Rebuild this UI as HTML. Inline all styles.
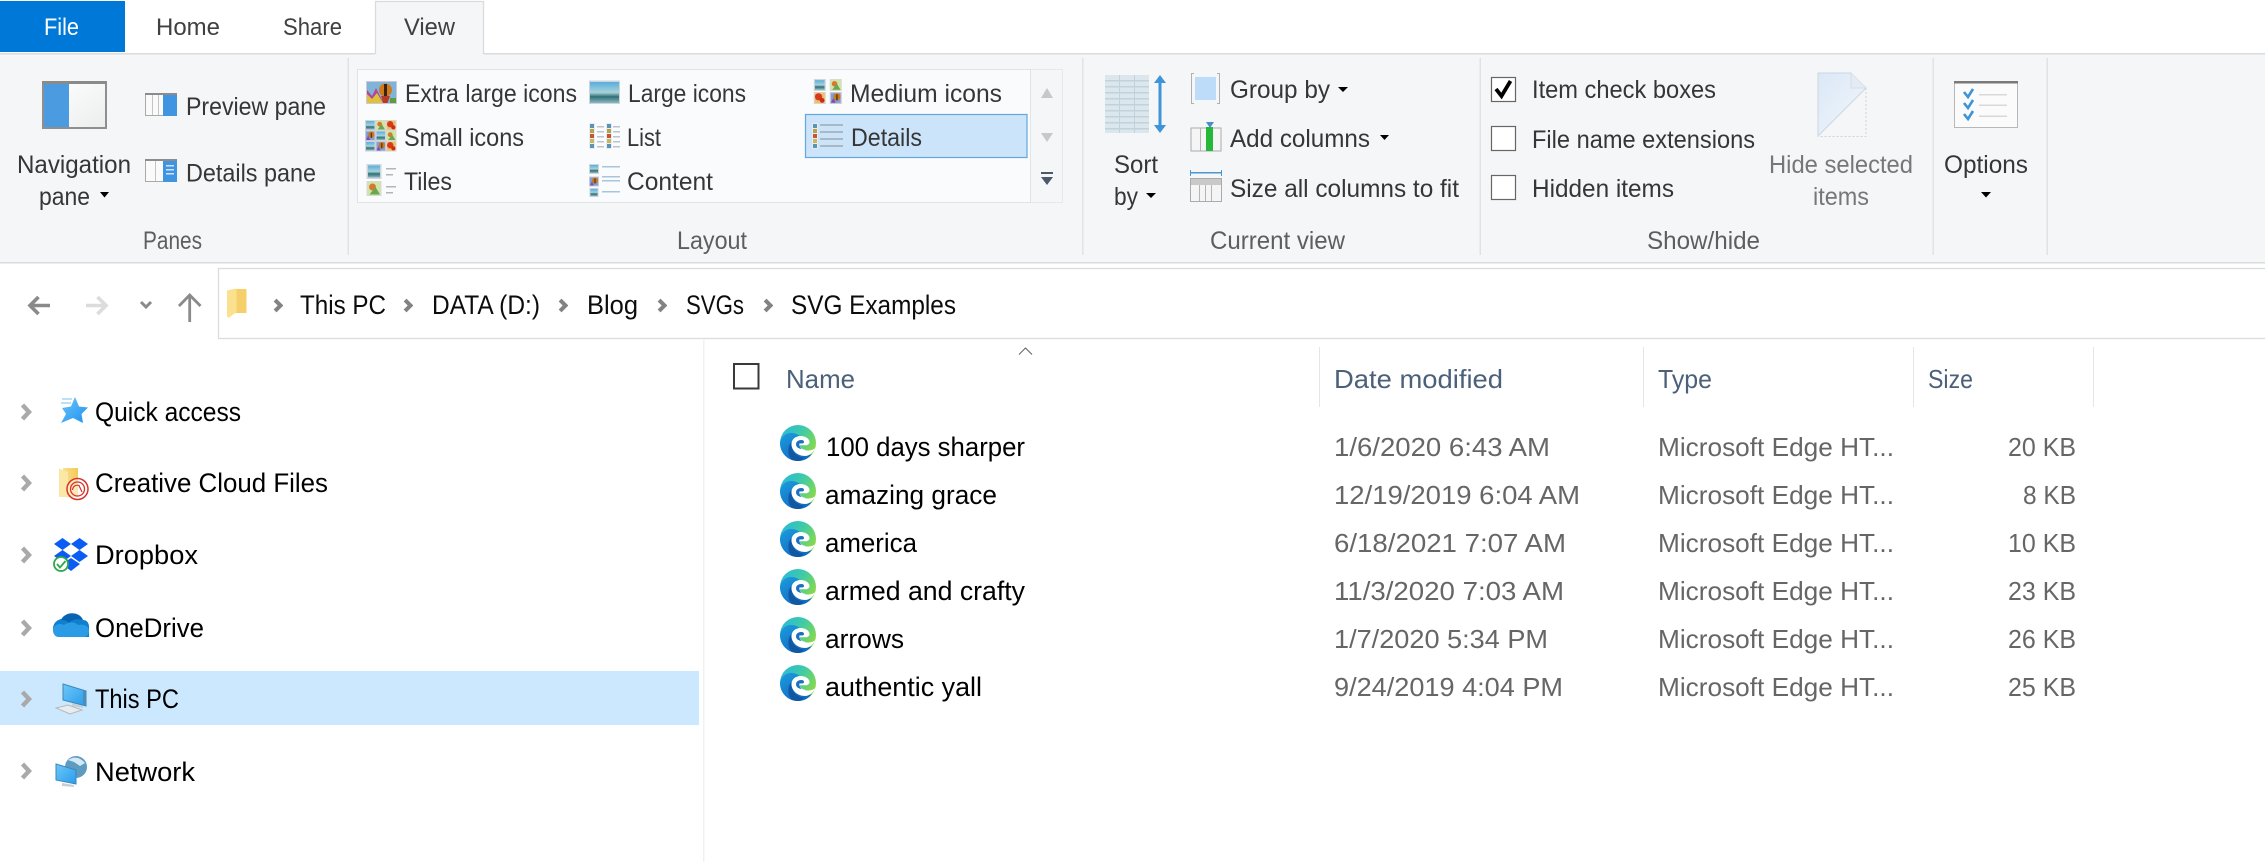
<!DOCTYPE html>
<html><head><meta charset="utf-8"><title>SVG Examples</title>
<style>
html,body{margin:0;padding:0;background:#fff;width:2265px;height:862px;overflow:hidden}
svg{display:block}
text{font-family:"Liberation Sans",sans-serif;font-size:25px;fill:#363636;white-space:pre}
.tab{font-size:24.5px;fill:#404040}
.lb{fill:#5e5e5e}
.nav{font-size:26.5px;fill:#000}
.adr{font-size:26.5px;fill:#0c0c0c}
.hd{font-size:26px;fill:#4c607a}
.nm{font-size:26.5px;fill:#000}
.dt{font-size:26px;fill:#666}
.dis{fill:#777}
</style></head><body>
<svg xmlns="http://www.w3.org/2000/svg" width="2265" height="862" viewBox="0 0 2265 862">
<defs>
<linearGradient id="sky" x1="0" y1="0" x2="0" y2="1"><stop offset="0" stop-color="#57aee0"/><stop offset=".5" stop-color="#a9d3d8"/><stop offset=".7" stop-color="#2f6f78"/><stop offset="1" stop-color="#8db9c0"/></linearGradient>
<linearGradient id="eg" x1="0" y1="0" x2="1" y2=".6"><stop offset="0" stop-color="#27b6e0"/><stop offset=".55" stop-color="#3fcba6"/><stop offset="1" stop-color="#8ad94a"/></linearGradient>
<linearGradient id="eb" x1="0" y1="0" x2=".6" y2="1"><stop offset="0" stop-color="#1d9be0"/><stop offset="1" stop-color="#0f6cc0"/></linearGradient>
<linearGradient id="navw" x1="0" y1="0" x2="1" y2="1"><stop offset="0" stop-color="#fff"/><stop offset="1" stop-color="#eceded"/></linearGradient>
<linearGradient id="pg" x1="0" y1="0" x2="1" y2="1"><stop offset="0" stop-color="#dbe8f7"/><stop offset="1" stop-color="#f2f6fb"/></linearGradient>
<linearGradient id="fold" x1="0" y1="0" x2="1" y2="0"><stop offset="0" stop-color="#fbe08e"/><stop offset="1" stop-color="#f3c95c"/></linearGradient>
<linearGradient id="star" x1="0" y1="0" x2="1" y2="1"><stop offset="0" stop-color="#6cc6fb"/><stop offset="1" stop-color="#1e90ef"/></linearGradient>
<linearGradient id="scr" x1="0" y1="0" x2="1" y2="1"><stop offset="0" stop-color="#6cc8f7"/><stop offset="1" stop-color="#2a9bec"/></linearGradient>

<symbol id="edge" viewBox="0 0 36 36">
<circle cx="18" cy="18" r="18" fill="url(#eg)"/>
<path d="M0 18C1 11 7 7 13 8C17 9 20 10.500 22 13C16 11 11.500 14 11.500 19C11.500 26 19 30.500 25 30.500C28 30.500 30 30 32 29C28.500 33.500 23.500 36 18 36C8 36 0 28 0 18Z" fill="url(#eb)"/>
<path d="M12 16.500C10 23 14 31 24 33C22 35.500 20 36 18 36C15.500 36 13.500 35.500 11.500 34.500C7 29 7.500 20 12 16.500Z" fill="#13519f" opacity=".85"/>
<path d="M11.500 19C11.500 14 16 10.800 21 11C26 11.200 29.500 14 29.500 17C29.500 19 28 20.300 25 20.300L19.500 20.300C20 23 23 25 27 25.500C30 25.800 33 25 35.500 23C33 28 29 31 25 31C17.500 31 11.500 25.500 11.500 19Z" fill="#fff"/>
<path d="M16 19.500C16 16.500 18.500 15 21.500 15C23 15 24 15.800 24 17C24 18 23.300 18.400 22 18.400L19.300 18.600C19 20.500 19.800 22 21.500 24C18 23.500 16 21.500 16 19.500Z" fill="#1a6fc0"/>
</symbol>

<symbol id="land" viewBox="0 0 10 10"><rect width="10" height="10" fill="#cfd6dc"/><rect x="1" y="1" width="8" height="8" fill="url(#sky)"/></symbol>
<symbol id="flo" viewBox="0 0 10 10"><rect width="10" height="10" fill="#d6dcc8"/><rect x="1" y="1" width="8" height="8" fill="#cfe6a8"/><circle cx="4" cy="4" r="2.300" fill="#d9772e"/><path d="M2 9L6 4L9 9Z" fill="#6aa84f"/></symbol>
<symbol id="red" viewBox="0 0 10 10"><rect width="10" height="10" fill="#e2cfc7"/><rect x="1" y="1" width="8" height="8" fill="#e8c25a"/><circle cx="4" cy="4" r="3" fill="#d8391c"/><circle cx="7" cy="7" r="2" fill="#c92c18"/></symbol>
<symbol id="bal" viewBox="0 0 10 10"><rect width="10" height="10" fill="#cfc8d8"/><rect x="1" y="1" width="8" height="8" fill="#7f9ed8"/><circle cx="6" cy="4" r="3" fill="#c9781e"/><path d="M1 9L3 5L5 9Z" fill="#7a4fa8"/><rect x="5.500" y="2" width="1" height="5" fill="#3c2a10"/></symbol>
<symbol id="tiny" viewBox="0 0 6 26"><rect width="6" height="26" fill="#e9edf2"/><rect x="1" y="1" width="4" height="4" fill="#5b93b8"/><rect x="1" y="6" width="4" height="4" fill="#b6a14f"/><rect x="1" y="11" width="4" height="4" fill="#c4553a"/><rect x="1" y="16" width="4" height="4" fill="#c9b85a"/><rect x="1" y="21" width="4" height="4" fill="#5b93b8"/></symbol>
<symbol id="chev" viewBox="0 0 12 18"><path d="M2.500 2L9 9L2.500 16" fill="none" stroke="#a9a9a9" stroke-width="4.400"/></symbol>
<symbol id="chevd" viewBox="0 0 12 18"><path d="M2.500 2.500L9 9L2.500 15.500" fill="none" stroke="#828282" stroke-width="4.800"/></symbol>
</defs>

<!-- tabs -->
<rect x="0" y="1" width="125" height="51" fill="#0078d7"/>
<text x="44" y="35" textLength="35" lengthAdjust="spacingAndGlyphs" style="fill:#fff" class="tab">File</text>
<text x="156" y="35" textLength="64" lengthAdjust="spacingAndGlyphs" class="tab">Home</text>
<text x="283" y="35" textLength="59" lengthAdjust="spacingAndGlyphs" class="tab">Share</text>

<!-- ribbon -->
<rect x="0" y="53" width="2265" height="209" fill="#f5f6f7"/>
<rect x="0" y="53" width="2265" height="1.500" fill="#dadbdc"/>
<rect x="0" y="262" width="2265" height="1.500" fill="#dadbdc"/>
<rect x="375" y="1" width="109" height="54" fill="#f5f6f7"/>
<path d="M375.500 54V1.500H483.500V54" fill="none" stroke="#dadbdc" stroke-width="1.300"/>
<text x="404" y="35" textLength="51" lengthAdjust="spacingAndGlyphs" class="tab">View</text>

<!-- separators -->
<rect x="347.500" y="58" width="1.500" height="197" fill="#e1e2e3"/>
<rect x="1082" y="58" width="1.500" height="197" fill="#e1e2e3"/>
<rect x="1479.500" y="58" width="1.500" height="197" fill="#e1e2e3"/>
<rect x="1932.500" y="58" width="1.500" height="197" fill="#e1e2e3"/>
<rect x="2046.500" y="58" width="1.500" height="197" fill="#e1e2e3"/>

<!-- Panes -->
<rect x="43" y="82" width="63" height="46" fill="url(#navw)" stroke="#8f8f8f" stroke-width="2"/>
<rect x="44" y="83" width="25" height="44" fill="#4b9be0"/>
<rect x="42" y="81" width="64" height="3" fill="#8a8a8a"/>
<text x="17" y="173" textLength="114" lengthAdjust="spacingAndGlyphs">Navigation</text>
<text x="39" y="205" textLength="51" lengthAdjust="spacingAndGlyphs">pane</text>
<path d="M100 192H109L104.500 197.500Z" fill="#000"/>

<rect x="145.500" y="93.500" width="31" height="22" fill="#fafafa" stroke="#a9a9a9"/>
<rect x="152" y="94" width="1" height="21" fill="#c4c4c4"/>
<rect x="158" y="94" width="1" height="21" fill="#c4c4c4"/>
<rect x="163" y="94" width="14" height="22" fill="#3f95e0"/>
<rect x="145" y="93" width="32" height="2" fill="#8c8c8c"/>
<text x="186" y="115" textLength="140" lengthAdjust="spacingAndGlyphs">Preview pane</text>

<rect x="145.500" y="159.500" width="31" height="22" fill="#fafafa" stroke="#a9a9a9"/>
<rect x="155" y="160" width="1" height="21" fill="#c4c4c4"/>
<rect x="163" y="160" width="14" height="22" fill="#3f95e0"/>
<rect x="145" y="159" width="32" height="2" fill="#8c8c8c"/>
<rect x="166" y="165" width="8" height="1.500" fill="#cfe4f8"/><rect x="166" y="169" width="8" height="1.500" fill="#cfe4f8"/><rect x="166" y="173" width="8" height="1.500" fill="#cfe4f8"/>
<text x="186" y="181.500" textLength="130" lengthAdjust="spacingAndGlyphs">Details pane</text>
<text x="143" y="249" textLength="59" lengthAdjust="spacingAndGlyphs" class="lb">Panes</text>

<!-- Layout gallery -->
<rect x="357.500" y="69.500" width="673" height="133" fill="#fafbfc" stroke="#e2e3e4"/>
<path d="M1031 69.500H1062.500V202.500H1031" fill="none" stroke="#e8e9ea"/>
<rect x="805.500" y="114.500" width="221.500" height="43" fill="#cce4f9" stroke="#62a8dc" stroke-width="1.200"/>
<path d="M1047 88L1053 98H1041Z" fill="#c6c8ca"/>
<path d="M1041 133H1053L1047 142Z" fill="#c6c8ca"/>
<rect x="1041" y="172" width="12" height="2" fill="#4a5a6a"/>
<path d="M1041 177H1053L1047 185Z" fill="#4a5a6a"/>

<!-- extra large -->
<rect x="366" y="81" width="31" height="23" fill="#cfc8d8"/>
<rect x="367" y="82" width="29" height="21" fill="#7fb3d8"/>
<path d="M367 103V90L372 96L376 88L381 98L384 103Z" fill="#b0489a"/>
<path d="M367 94L372 99L377 93L383 103H367Z" fill="#e0c23a"/>
<circle cx="385.500" cy="90" r="6.500" fill="#d07a1c"/>
<rect x="384" y="84" width="3" height="12" fill="#3a2410"/>
<path d="M381 96H390L387.500 103H383.500Z" fill="#b83a20"/>
<rect x="390" y="98" width="6" height="5" fill="#5c9c40"/>
<text x="405" y="102" textLength="172" lengthAdjust="spacingAndGlyphs">Extra large icons</text>

<!-- large -->
<rect x="589" y="80.500" width="31" height="23.500" fill="#cdd5dc"/>
<rect x="590" y="82" width="29" height="21" fill="url(#sky)"/>
<text x="628" y="102" textLength="118" lengthAdjust="spacingAndGlyphs">Large icons</text>

<!-- medium -->
<use href="#land" x="812" y="79" width="15.500" height="12" preserveAspectRatio="none"/>
<use href="#flo" x="828" y="79" width="15.500" height="12"/>
<use href="#red" x="812" y="92" width="15.500" height="12"/>
<use href="#bal" x="828" y="92" width="15.500" height="12"/>
<text x="850" y="102" textLength="152" lengthAdjust="spacingAndGlyphs">Medium icons</text>

<!-- small -->
<use href="#land" x="365" y="120" width="10.500" height="10.500"/><use href="#flo" x="375.500" y="120" width="10.500" height="10.500"/><use href="#red" x="386" y="120" width="10.500" height="10.500"/>
<use href="#bal" x="365" y="130.500" width="10.500" height="10.500"/><use href="#land" x="375.500" y="130.500" width="10.500" height="10.500"/><use href="#flo" x="386" y="130.500" width="10.500" height="10.500"/>
<use href="#land" x="365" y="141" width="10.500" height="10.500"/><use href="#bal" x="375.500" y="141" width="10.500" height="10.500"/><use href="#red" x="386" y="141" width="10.500" height="10.500"/>
<text x="404" y="146" textLength="120" lengthAdjust="spacingAndGlyphs">Small icons</text>

<!-- list -->
<use href="#tiny" x="589" y="123" width="6" height="26"/><use href="#tiny" x="606" y="123" width="6" height="26"/>
<g fill="#b9c4cf"><rect x="597" y="126" width="7" height="1.500"/><rect x="597" y="131" width="7" height="1.500"/><rect x="597" y="136" width="7" height="1.500"/><rect x="597" y="141" width="7" height="1.500"/><rect x="597" y="146" width="7" height="1.500"/><rect x="613" y="126" width="7" height="1.500"/><rect x="613" y="131" width="7" height="1.500"/><rect x="613" y="136" width="7" height="1.500"/><rect x="613" y="141" width="7" height="1.500"/><rect x="613" y="146" width="7" height="1.500"/></g>
<text x="627" y="146" textLength="34" lengthAdjust="spacingAndGlyphs">List</text>

<!-- details -->
<use href="#tiny" x="812" y="123" width="6" height="26"/>
<g fill="#aab7c4"><rect x="820" y="124" width="23" height="2"/><rect x="820" y="131" width="23" height="2"/><rect x="820" y="138" width="23" height="2"/><rect x="820" y="145" width="23" height="2"/></g>
<text x="851" y="146" textLength="71" lengthAdjust="spacingAndGlyphs">Details</text>

<!-- tiles -->
<use href="#land" x="365.500" y="164" width="17" height="15"/><use href="#flo" x="365.500" y="181" width="17" height="15"/>
<g fill="#b5b5b5"><rect x="386" y="168" width="10" height="1.500"/><rect x="386" y="174" width="7" height="1.500"/><rect x="386" y="186" width="10" height="1.500"/><rect x="386" y="192" width="7" height="1.500"/></g>
<text x="404" y="190" textLength="48" lengthAdjust="spacingAndGlyphs">Tiles</text>

<!-- content -->
<use href="#land" x="589" y="164" width="10" height="10"/><use href="#bal" x="589" y="176" width="10" height="11"/><use href="#land" x="589" y="188" width="10" height="9"/>
<g fill="#a9c5dd"><rect x="602" y="166" width="18" height="1.500"/><rect x="602" y="176" width="18" height="1.500"/><rect x="602" y="180" width="18" height="1.500"/><rect x="602" y="191" width="18" height="1.500"/></g>
<text x="627" y="190" textLength="86" lengthAdjust="spacingAndGlyphs">Content</text>
<text x="677" y="249" textLength="70" lengthAdjust="spacingAndGlyphs" class="lb">Layout</text>

<!-- Current view -->
<rect x="1105" y="75" width="44" height="58" fill="#dbe7ec"/>
<g fill="#c0d3dc"><rect x="1105" y="80" width="44" height="1.500"/><rect x="1105" y="86" width="44" height="1.500"/><rect x="1105" y="92" width="44" height="1.500"/><rect x="1105" y="98" width="44" height="1.500"/><rect x="1105" y="104" width="44" height="1.500"/><rect x="1105" y="110" width="44" height="1.500"/><rect x="1105" y="116" width="44" height="1.500"/><rect x="1105" y="122" width="44" height="1.500"/><rect x="1105" y="128" width="44" height="1.500"/><rect x="1119" y="75" width="1" height="58"/><rect x="1134" y="75" width="1" height="58"/></g>
<rect x="1158.500" y="80" width="3" height="48" fill="#3d94d8"/>
<path d="M1160 75L1166 83H1154Z M1160 133L1166 125H1154Z" fill="#3d94d8"/>
<text x="1114" y="173" textLength="44" lengthAdjust="spacingAndGlyphs">Sort</text>
<text x="1114" y="205" textLength="24" lengthAdjust="spacingAndGlyphs">by</text>
<path d="M1146 193H1156L1151 198Z" fill="#000"/>

<path d="M1194 73.500H1191.500V103.500H1194M1217 73.500H1219.500V103.500H1217" fill="none" stroke="#b0b0b0"/>
<rect x="1195" y="77" width="21" height="23" fill="#bcdcf9"/>
<text x="1230" y="98" textLength="100" lengthAdjust="spacingAndGlyphs">Group by</text>
<path d="M1338 87H1348L1343 92Z" fill="#000"/>

<rect x="1191" y="128" width="30" height="23" fill="#f5f5f5" stroke="#ababab"/>
<rect x="1200" y="128" width="1" height="23" fill="#b5b5b5"/>
<rect x="1206" y="127" width="7" height="24" fill="#25b83a"/>
<path d="M1206 122H1214L1210 128Z" fill="#4a8cc8"/>
<text x="1230" y="147" textLength="140" lengthAdjust="spacingAndGlyphs">Add columns</text>
<path d="M1380 135H1389L1384.500 140Z" fill="#000"/>

<rect x="1190" y="172" width="32" height="1.500" fill="#4a96d0"/>
<rect x="1190" y="170" width="1" height="6" fill="#4a96d0"/><rect x="1221" y="170" width="1" height="6" fill="#4a96d0"/>
<rect x="1190.500" y="178.500" width="31" height="23" fill="#f5f5f5" stroke="#ababab"/>
<rect x="1191" y="179" width="30" height="6" fill="#c9c9c9"/>
<g fill="#b5b5b5"><rect x="1199" y="185" width="1" height="16"/><rect x="1205" y="185" width="1" height="16"/><rect x="1211" y="185" width="1" height="16"/></g>
<text x="1230" y="197" textLength="229" lengthAdjust="spacingAndGlyphs">Size all columns to fit</text>
<text x="1210" y="249" textLength="135" lengthAdjust="spacingAndGlyphs" class="lb">Current view</text>

<!-- Show/hide -->
<rect x="1491.500" y="77.500" width="24" height="24" fill="#fff" stroke="#666" stroke-width="1.200"/>
<path d="M1496 89L1501.500 96L1510.500 81" fill="none" stroke="#000" stroke-width="3.800"/>
<text x="1532" y="98" textLength="184" lengthAdjust="spacingAndGlyphs">Item check boxes</text>
<rect x="1491.500" y="126.500" width="24" height="24" fill="#fff" stroke="#666" stroke-width="1.200"/>
<text x="1532" y="148" textLength="223" lengthAdjust="spacingAndGlyphs">File name extensions</text>
<rect x="1491.500" y="175.500" width="24" height="24" fill="#fff" stroke="#666" stroke-width="1.200"/>
<text x="1532" y="197" textLength="142" lengthAdjust="spacingAndGlyphs">Hidden items</text>
<text x="1647" y="249" textLength="113" lengthAdjust="spacingAndGlyphs" class="lb">Show/hide</text>

<path d="M1818 73H1851L1866 88L1818 136Z" fill="url(#pg)" stroke="#ccd6e2"/>
<path d="M1851 73V88H1866" fill="#e4ebf3" stroke="#d5dde6"/>
<path d="M1866 88V136.500H1818" fill="none" stroke="#cfd4da" stroke-dasharray="2 2"/>
<text x="1769" y="173" textLength="144" lengthAdjust="spacingAndGlyphs" class="dis">Hide selected</text>
<text x="1813" y="205" textLength="56" lengthAdjust="spacingAndGlyphs" class="dis">items</text>

<!-- Options -->
<rect x="1954.500" y="81.500" width="63" height="46" fill="#fbfbfb" stroke="#b8b8b8"/>
<rect x="1954" y="81" width="64" height="2.500" fill="#7a7a7a"/>
<g fill="none" stroke="#3d94d8" stroke-width="2.600"><path d="M1964 92L1968 97L1973 89"/><path d="M1964 103L1968 108L1973 100"/><path d="M1964 114L1968 119L1973 111"/></g>
<g fill="#d8d8d8"><rect x="1979" y="94" width="28" height="1.500"/><rect x="1979" y="104.500" width="28" height="1.500"/><rect x="1979" y="115.500" width="28" height="1.500"/></g>
<text x="1944" y="173" textLength="84" lengthAdjust="spacingAndGlyphs">Options</text>
<path d="M1981 192H1991L1986 197.500Z" fill="#000"/>

<!-- nav buttons -->
<g fill="none" stroke="#8a8a8a" stroke-width="3.600"><path d="M30 305.500H50"/><path d="M38.500 297L30 305.500L38.500 314"/></g>
<g fill="none" stroke="#dcdcdc" stroke-width="3.600"><path d="M86 305.500H106"/><path d="M97.500 297L106 305.500L97.500 314"/></g>
<path d="M141 302L146 307L151 302" fill="none" stroke="#8a8a8a" stroke-width="3"/>
<g fill="none" stroke="#8a8a8a" stroke-width="2.800"><path d="M189.700 295V322"/><path d="M179 306L189.700 295L200.500 306"/></g>

<!-- address -->
<path d="M2265 268.500H218.500V338.500H2265" fill="#fff" stroke="#dcdcdc" stroke-width="1.300"/>
<path d="M233 289H246.500V313H233Z" fill="#f5cf6a"/>
<path d="M227 290.500L236.500 288.500V312L228.500 318L227 316Z" fill="#fbe08e"/>
<use href="#chevd" x="273" y="298" width="10" height="15"/>
<use href="#chevd" x="403" y="298" width="10" height="15"/>
<use href="#chevd" x="558" y="298" width="10" height="15"/>
<use href="#chevd" x="657" y="298" width="10" height="15"/>
<use href="#chevd" x="763" y="298" width="10" height="15"/>
<text x="300" y="314" textLength="86" lengthAdjust="spacingAndGlyphs" class="adr">This PC</text>
<text x="432" y="314" textLength="108" lengthAdjust="spacingAndGlyphs" class="adr">DATA (D:)</text>
<text x="587" y="314" textLength="51" lengthAdjust="spacingAndGlyphs" class="adr">Blog</text>
<text x="686" y="314" textLength="58" lengthAdjust="spacingAndGlyphs" class="adr">SVGs</text>
<text x="791" y="314" textLength="165" lengthAdjust="spacingAndGlyphs" class="adr">SVG Examples</text>

<!-- tree -->
<rect x="0" y="671" width="699" height="54" fill="#cce8ff"/>
<use href="#chev" x="20" y="403" width="12" height="18"/>
<use href="#chev" x="20" y="474" width="12" height="18"/>
<use href="#chev" x="20" y="546" width="12" height="18"/>
<use href="#chev" x="20" y="619" width="12" height="18"/>
<use href="#chev" x="20" y="690" width="12" height="18"/>
<use href="#chev" x="20" y="762" width="12" height="18"/>

<!-- star -->
<path d="M75 397L79 406.500L88 407.500L81.500 414L83 423L73 418L61 423L66 414L62 408L71 406.500Z" fill="url(#star)"/>
<g stroke="#9ed4f5" stroke-width="1.400"><path d="M62 399H72"/><path d="M61 403H71"/></g>
<text x="95" y="421" textLength="146" lengthAdjust="spacingAndGlyphs" class="nav">Quick access</text>

<!-- creative cloud -->
<path d="M63 468H78V497H63Z" fill="url(#fold)"/>
<path d="M59 468.500L68 472V497L59 497Z" fill="#fbe7a6"/>
<circle cx="77.500" cy="489" r="10.500" fill="#fff" fill-opacity=".55" stroke="#d8342a" stroke-width="1.500"/>
<circle cx="77.500" cy="489" r="7" fill="none" stroke="#d8342a" stroke-width="1.300"/>
<path d="M72.500 490C73 486 76 484.500 79 485.500L82 492" fill="none" stroke="#d8342a" stroke-width="1.200"/>
<text x="95" y="492" textLength="233" lengthAdjust="spacingAndGlyphs" class="nav">Creative Cloud Files</text>

<!-- dropbox -->
<g fill="#0a5cf5"><path d="M54 544L62.500 538L71 544L62.500 550Z"/><path d="M71 544L79.500 538L88 544L79.500 550Z"/><path d="M54 556L62.500 550L71 556L62.500 562Z"/><path d="M71 556L79.500 550L88 556L79.500 562Z"/><path d="M62 564L71 558L80 564L71 571Z"/></g>
<circle cx="61" cy="564" r="7" fill="#fff" stroke="#2ea84a" stroke-width="1.800"/>
<path d="M57 564L60 567.500L65.500 561" fill="none" stroke="#2ea84a" stroke-width="1.800"/>
<text x="95" y="564" textLength="103" lengthAdjust="spacingAndGlyphs" class="nav">Dropbox</text>

<!-- onedrive -->
<path d="M53 629C53 622 59 618 65 619C68 611 80 612 83 620C87 620 89 623 89 627V637H60C56 637 53 634 53 629Z" fill="#0f7fd0"/>
<path d="M53 630C53 626 58 622 64 625C68 622 74 621 78 625C82 624 89 625 89 631C89 635 86 637 84 637H59C55 637 53 634 53 630Z" fill="#2a9be5"/>
<path d="M61 620C65 611 79 611 83 620C76 618 72 620 69 623C66 620 63 620 61 620Z" fill="#0a63b0"/>
<text x="95" y="637" textLength="109" lengthAdjust="spacingAndGlyphs" class="nav">OneDrive</text>

<!-- this pc -->
<path d="M63 684L86 691V706L63 700Z" fill="url(#scr)" stroke="#3a87bd"/>
<path d="M86 691V706L83 704V691Z" fill="#4d8db8"/>
<path d="M72 703L83 706V708L72 706Z" fill="#c9ced3"/>
<path d="M56 708L68 705L82 710L70 714Z" fill="#e9ecef" stroke="#b5b9bd"/>
<text x="95" y="708" textLength="84" lengthAdjust="spacingAndGlyphs" class="nav">This PC</text>

<!-- network -->
<circle cx="76" cy="767" r="11" fill="#5e9bc0"/>
<path d="M68 760C74 756 80 757 85 763L80 766L74 762Z" fill="#d5e8f5"/>
<path d="M56 764L76 770V784L56 780Z" fill="url(#scr)" stroke="#3a87bd"/>
<path d="M62 783L74 785V787L62 786Z" fill="#c9ced3"/>
<text x="95" y="781" textLength="100" lengthAdjust="spacingAndGlyphs" class="nav">Network</text>

<!-- divider -->
<rect x="703" y="340" width="1.500" height="522" fill="#f1f1f1"/>

<!-- header -->
<rect x="734" y="364" width="24.500" height="24.500" fill="#fff" stroke="#3a3a3a" stroke-width="2"/>
<text x="786" y="388" textLength="69" lengthAdjust="spacingAndGlyphs" class="hd">Name</text>
<path d="M1019 354.500L1025.500 348L1032 354.500" fill="none" stroke="#666" stroke-width="1.100"/>
<g fill="#e5e5e5"><rect x="1319" y="347" width="1" height="60"/><rect x="1643" y="347" width="1" height="60"/><rect x="1913" y="347" width="1" height="60"/><rect x="2093" y="347" width="1" height="60"/></g>
<text x="1334" y="388" textLength="169" lengthAdjust="spacingAndGlyphs" class="hd">Date modified</text>
<text x="1658" y="388" textLength="54" lengthAdjust="spacingAndGlyphs" class="hd">Type</text>
<text x="1928" y="388" textLength="45" lengthAdjust="spacingAndGlyphs" class="hd">Size</text>

<!-- rows -->
<use href="#edge" x="780" y="425" width="36" height="36"/>
<text x="826" y="456" textLength="199" lengthAdjust="spacingAndGlyphs" class="nm">100 days sharper</text>
<text x="1334" y="456" textLength="216" lengthAdjust="spacingAndGlyphs" class="dt">1/6/2020 6:43 AM</text>
<text x="1658" y="456" textLength="236" lengthAdjust="spacingAndGlyphs" class="dt">Microsoft Edge HT...</text>
<text x="2008" y="456" textLength="68" lengthAdjust="spacingAndGlyphs" class="dt">20 KB</text>

<use href="#edge" x="780" y="473" width="36" height="36"/>
<text x="825" y="504" textLength="172" lengthAdjust="spacingAndGlyphs" class="nm">amazing grace</text>
<text x="1334" y="504" textLength="246" lengthAdjust="spacingAndGlyphs" class="dt">12/19/2019 6:04 AM</text>
<text x="1658" y="504" textLength="236" lengthAdjust="spacingAndGlyphs" class="dt">Microsoft Edge HT...</text>
<text x="2023" y="504" textLength="53" lengthAdjust="spacingAndGlyphs" class="dt">8 KB</text>

<use href="#edge" x="780" y="521" width="36" height="36"/>
<text x="825" y="552" textLength="92" lengthAdjust="spacingAndGlyphs" class="nm">america</text>
<text x="1334" y="552" textLength="232" lengthAdjust="spacingAndGlyphs" class="dt">6/18/2021 7:07 AM</text>
<text x="1658" y="552" textLength="236" lengthAdjust="spacingAndGlyphs" class="dt">Microsoft Edge HT...</text>
<text x="2008" y="552" textLength="68" lengthAdjust="spacingAndGlyphs" class="dt">10 KB</text>

<use href="#edge" x="780" y="569" width="36" height="36"/>
<text x="825" y="600" textLength="200" lengthAdjust="spacingAndGlyphs" class="nm">armed and crafty</text>
<text x="1334" y="600" textLength="230" lengthAdjust="spacingAndGlyphs" class="dt">11/3/2020 7:03 AM</text>
<text x="1658" y="600" textLength="236" lengthAdjust="spacingAndGlyphs" class="dt">Microsoft Edge HT...</text>
<text x="2008" y="600" textLength="68" lengthAdjust="spacingAndGlyphs" class="dt">23 KB</text>

<use href="#edge" x="780" y="617" width="36" height="36"/>
<text x="825" y="648" textLength="79" lengthAdjust="spacingAndGlyphs" class="nm">arrows</text>
<text x="1334" y="648" textLength="214" lengthAdjust="spacingAndGlyphs" class="dt">1/7/2020 5:34 PM</text>
<text x="1658" y="648" textLength="236" lengthAdjust="spacingAndGlyphs" class="dt">Microsoft Edge HT...</text>
<text x="2008" y="648" textLength="68" lengthAdjust="spacingAndGlyphs" class="dt">26 KB</text>

<use href="#edge" x="780" y="665" width="36" height="36"/>
<text x="825" y="696" textLength="157" lengthAdjust="spacingAndGlyphs" class="nm">authentic yall</text>
<text x="1334" y="696" textLength="229" lengthAdjust="spacingAndGlyphs" class="dt">9/24/2019 4:04 PM</text>
<text x="1658" y="696" textLength="236" lengthAdjust="spacingAndGlyphs" class="dt">Microsoft Edge HT...</text>
<text x="2008" y="696" textLength="68" lengthAdjust="spacingAndGlyphs" class="dt">25 KB</text>
</svg>
</body></html>
